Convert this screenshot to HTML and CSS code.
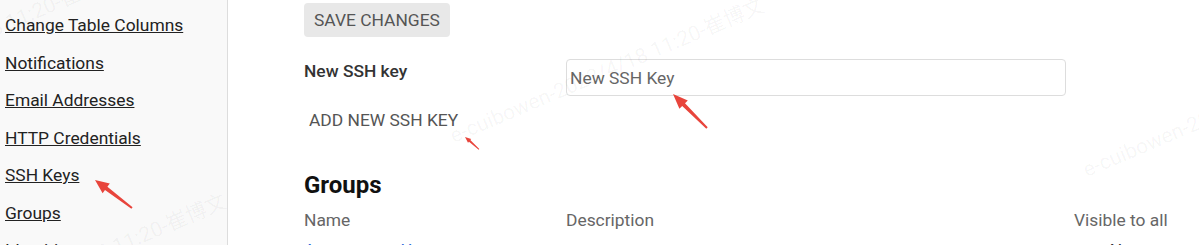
FILE: index.html
```html
<!DOCTYPE html>
<html lang="en">
<head>
<meta charset="utf-8">
<title>Settings - SSH Keys</title>
<link rel="stylesheet" href="styles.css">
</head>
<body>
<div class="page">
  <nav class="sidebar">
    <a class="nav-link" href="#">Change Table Columns</a>
    <a class="nav-link" href="#">Notifications</a>
    <a class="nav-link" href="#">Email Addresses</a>
    <a class="nav-link" href="#">HTTP Credentials</a>
    <a class="nav-link" href="#">SSH Keys</a>
    <a class="nav-link" href="#">Groups</a>
    <a class="nav-link" href="#">Identities</a>
  </nav>
  <main class="content">
    <button class="btn-save" type="button">SAVE CHANGES</button>
    <div class="key-row">
      <label class="key-label" for="newKey">New SSH key</label>
      <input class="key-input" id="newKey" type="text" placeholder="New SSH Key">
    </div>
    <button class="btn-add" type="button">ADD NEW SSH KEY</button>
    <h2 class="section-title">Groups</h2>
    <table class="groups">
      <thead>
        <tr>
          <th class="col-name">Name</th>
          <th class="col-desc">Description</th>
          <th class="col-vis">Visible to all</th>
        </tr>
      </thead>
      <tbody>
        <tr>
          <td class="col-name"><a class="group-link" href="#">Anonymous Users</a></td>
          <td class="col-desc"></td>
          <td class="col-vis cell-center">No</td>
        </tr>
      </tbody>
    </table>
  </main>

  <div class="watermark wm1">e-cuibowen-2023/4/18 11:20-崔博文</div>
  <div class="watermark wm2">e-cuibowen-2023/4/18 11:20-崔博文</div>
  <div class="watermark wm3">e-cuibowen-2023/4/18 11:20-崔博文</div>
  <div class="watermark wm4">e-cuibowen-2023/4/18 11:20-崔博文</div>

  <svg class="arrows" width="1199" height="245" viewBox="0 0 1199 245" aria-hidden="true">
    <polygon points="707.7,127.3 685,103.2 687.8,100.4 673,94 679.4,108.8 682.2,106 706.3,128.7"/>
    <polygon points="132.6,207.2 107.4,186.8 109.8,183.6 95,180 102.6,193.2 105,190 131.4,208.8"/>
    <polygon points="479.3,148.9 470.3,140.1 471.2,139 465,137 468,142.8 469,141.7 478.7,149.7"/>
  </svg>
</div>
</body>
</html>
```

FILE: styles.css
```css
* {
  box-sizing: border-box;
}

html, body {
  margin: 0;
  padding: 0;
  background: #ffffff;
}

body {
  font-family: Roboto, "Noto Sans", "Noto Sans CJK SC", sans-serif;
  font-size: 17.4px;
  color: #333333;
  overflow: hidden;
}

.page {
  position: relative;
  display: flex;
  width: 1199px;
  height: 245px;
  overflow: hidden;
}

.sidebar {
  flex: 0 0 228px;
  display: flex;
  flex-direction: column;
  padding-top: 7px;
  background: #f9f9f9;
  border-right: 1px solid #dddddd;
}

.nav-link {
  display: block;
  height: 37.5px;
  line-height: 37.5px;
  padding-left: 5px;
  color: #222222;
  text-decoration: underline;
  white-space: nowrap;
}

.content {
  flex: 1 1 auto;
  display: flex;
  flex-direction: column;
  align-items: flex-start;
  padding-left: 76px;
}

.btn-save {
  margin-top: 3px;
  height: 34px;
  padding: 0 10px;
  border: none;
  border-radius: 4px;
  background: #e8e8e8;
  color: #555555;
  font-family: inherit;
  font-size: 17.4px;
  line-height: 34px;
}

.key-row {
  display: flex;
  align-items: flex-start;
  margin-top: 22px;
}

.key-label {
  width: 262px;
  padding-top: 2px;
  line-height: 20px;
  font-weight: 500;
  color: #333333;
}

.key-input {
  width: 500px;
  height: 37px;
  padding: 0 3px;
  border: 1px solid #dddddd;
  border-radius: 4px;
  font-family: inherit;
  font-size: 17.4px;
  color: #333333;
  background: #ffffff;
}

.key-input::placeholder {
  color: #666666;
}

.btn-add {
  margin-top: 7px;
  height: 34px;
  padding: 0 5px;
  border: none;
  background: transparent;
  color: #555555;
  font-family: inherit;
  font-size: 17.4px;
  line-height: 34px;
}

.section-title {
  margin: 34px 0 0;
  font-size: 24px;
  line-height: 28px;
  font-weight: 700;
  color: #111111;
}

.groups {
  border-collapse: collapse;
  border-spacing: 0;
}

.groups th {
  padding: 11px 0 9px;
  text-align: left;
  font-weight: 400;
  line-height: 20px;
  color: #666666;
  white-space: nowrap;
}

.groups td {
  padding: 1px 0 8px;
  line-height: 20px;
  color: #333333;
}

.col-name {
  width: 262px;
}

.col-desc {
  width: 508px;
}

.col-vis {
  white-space: nowrap;
}

.cell-center {
  text-align: center;
}

.group-link {
  color: #2a66d9;
  text-decoration: none;
}

.watermark {
  position: absolute;
  font-size: 21px;
  line-height: 20px;
  color: rgba(0, 0, 0, 0.045);
  white-space: nowrap;
  transform-origin: 0 100%;
  transform: rotate(-23deg);
  pointer-events: none;
}

.wm1 {
  left: 455px;
  top: 126px;
}

.wm2 {
  left: 1088px;
  top: 160px;
}

.wm3 {
  left: -190px;
  top: 98px;
}

.wm4 {
  left: -83px;
  top: 322px;
}

.arrows {
  position: absolute;
  left: 0;
  top: 0;
  pointer-events: none;
}

.arrows polygon {
  fill: #e8453c;
}
```
